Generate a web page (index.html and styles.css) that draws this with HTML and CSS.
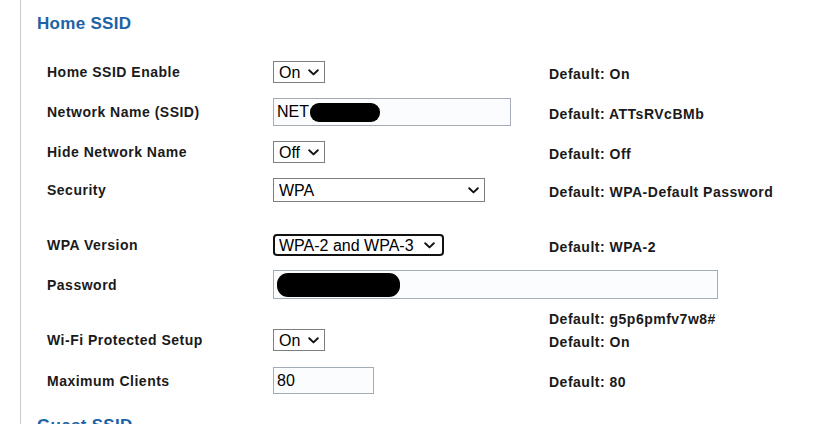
FILE: index.html
```html
<!DOCTYPE html>
<html>
<head>
<title>Home SSID</title>
	<meta charset="utf-8">
	<link rel="stylesheet" href="styles.css">
</head>
<body>
<div class="panel">
	<h2 class="section_title">Home SSID</h2>
	<div class="settings">
		<div class="row h40">
			<span class="label">Home SSID Enable</span>
			<span class="control">
				<span class="select_wrap">
					<select class="sel w_small"><option>On</option><option>Off</option></select>
					<svg class="chev" width="11" height="7" viewBox="0 0 11 7"><path d="M1.2 1.2 L5.5 5.4 L9.8 1.2" /></svg>
				</span>
			</span>
			<span class="default">Default: On</span>
		</div>
		<div class="row h40">
			<span class="label">Network Name (SSID)</span>
			<span class="control">
				<span class="textbox w_ssid">NET<span class="redact r_ssid"></span></span>
			</span>
			<span class="default">Default: ATTsRVcBMb</span>
		</div>
		<div class="row h40">
			<span class="label">Hide Network Name</span>
			<span class="control">
				<span class="select_wrap">
					<select class="sel w_small"><option>Off</option><option>On</option></select>
					<svg class="chev" width="11" height="7" viewBox="0 0 11 7"><path d="M1.2 1.2 L5.5 5.4 L9.8 1.2" /></svg>
				</span>
			</span>
			<span class="default">Default: Off</span>
		</div>
		<div class="row h36">
			<span class="label">Security</span>
			<span class="control">
				<span class="select_wrap">
					<select class="sel w_security"><option>WPA</option></select>
					<svg class="chev" width="11" height="7" viewBox="0 0 11 7"><path d="M1.2 1.2 L5.5 5.4 L9.8 1.2" /></svg>
				</span>
			</span>
			<span class="default">Default: WPA-Default Password</span>
		</div>
		<div class="row h38 gap_top">
			<span class="label">WPA Version</span>
			<span class="control">
				<span class="select_wrap">
					<select class="sel w_wpa focused"><option>WPA-2 and WPA-3</option><option>WPA-2</option></select>
					<svg class="chev chev_wpa" width="11" height="7" viewBox="0 0 11 7"><path d="M1.2 1.2 L5.5 5.4 L9.8 1.2" /></svg>
				</span>
			</span>
			<span class="default">Default: WPA-2</span>
		</div>
		<div class="row h41">
			<span class="label">Password</span>
			<span class="control">
				<span class="textbox w_pass"><span class="redact r_pass"></span></span>
			</span>
			<span class="default"></span>
		</div>
		<div class="row h24">
			<span class="label"></span>
			<span class="control"></span>
			<span class="default">Default: g5p6pmfv7w8#</span>
		</div>
		<div class="row h22">
			<span class="label">Wi-Fi Protected Setup</span>
			<span class="control">
				<span class="select_wrap">
					<select class="sel w_small"><option>On</option><option>Off</option></select>
					<svg class="chev" width="11" height="7" viewBox="0 0 11 7"><path d="M1.2 1.2 L5.5 5.4 L9.8 1.2" /></svg>
				</span>
			</span>
			<span class="default">Default: On</span>
		</div>
		<div class="row h41 gap_small">
			<span class="label">Maximum Clients</span>
			<span class="control">
				<span class="textbox w_max">80</span>
			</span>
			<span class="default">Default: 80</span>
		</div>
	</div>
	<h2 class="section_title guest">Guest SSID</h2>
</div>
</body>
</html>
```

FILE: styles.css
```css
html, body {
	margin: 0;
	padding: 0;
	background-color: #fff;
	font-family: "Liberation Sans", Arial, sans-serif;
	color: #1a1a1a;
}
body {
	overflow: hidden;
	height: 424px;
}
.panel {
	margin-left: 20px;
	padding-left: 16px;
	border-left: 1px solid #cacaca;
	min-height: 424px;
	box-sizing: border-box;
}
.section_title {
	margin: 0;
	padding-top: 13px;
	font-size: 17px;
	line-height: 22px;
	font-weight: bold;
	letter-spacing: 0.3px;
	color: #1b62a6;
}
.section_title.guest {
	padding-top: 14px;
}
.settings {
	margin-top: 17px;
	margin-left: 10px;
}
.row {
	display: grid;
	grid-template-columns: 226px 276px 1fr;
	align-items: center;
}
.row.h40 { height: 40px; }
.row.h36 { height: 36px; }
.row.h38 { height: 38px; }
.row.h41 { height: 41px; }
.row.h24 { height: 24px; }
.row.h22 { height: 22px; }
.row.gap_top { margin-top: 18px; }
.row.gap_small { margin-top: 9px; }
.label, .default {
	font-size: 14px;
	font-weight: bold;
	letter-spacing: 0.5px;
	white-space: nowrap;
}
.default {
	padding-top: 3px;
}
.control {
	display: flex;
	align-items: center;
	white-space: nowrap;
	min-width: 0;
}
.select_wrap {
	position: relative;
	display: inline-block;
	flex-shrink: 0;
}
.sel {
	-webkit-appearance: none;
	appearance: none;
	display: block;
	margin: 0;
	height: 22px;
	padding: 0 0 0 5px;
	font-family: "Liberation Sans", Arial, sans-serif;
	font-size: 16px;
	color: #000;
	background-color: #fff;
	border: 1px solid #7e7e7e;
	border-radius: 0;
	box-sizing: border-box;
	outline: none;
}
.sel.w_small { width: 52px; }
.sel.w_security { width: 212px; height: 24px; }
.sel.w_wpa {
	width: 171px;
	padding-left: 4px;
}
.sel.focused {
	border: 2px solid #111;
	border-radius: 4px;
}
.chev {
	position: absolute;
	right: 6px;
	top: 50%;
	margin-top: -3px;
	pointer-events: none;
}
.chev path {
	fill: none;
	stroke: #111;
	stroke-width: 1.9;
	stroke-linecap: round;
	stroke-linejoin: round;
}
.chev.chev_wpa {
	right: 9px;
}
.textbox {
	display: flex;
	align-items: center;
	flex-shrink: 0;
	padding-left: 3px;
	font-size: 16px;
	color: #000;
	background-color: #fbfcfe;
	border: 1px solid #a3abb8;
	box-sizing: border-box;
	overflow: hidden;
}
.textbox.w_ssid { width: 238px; height: 28px; }
.textbox.w_pass { width: 445px; height: 29px; }
.textbox.w_max { width: 101px; height: 27px; }
.redact {
	display: inline-block;
	background-color: #000;
	border-radius: 9px;
}
.redact.r_ssid {
	width: 70px;
	height: 19px;
	margin-left: 1px;
}
.redact.r_pass {
	width: 123px;
	height: 24px;
	border-radius: 11px;
}
```
